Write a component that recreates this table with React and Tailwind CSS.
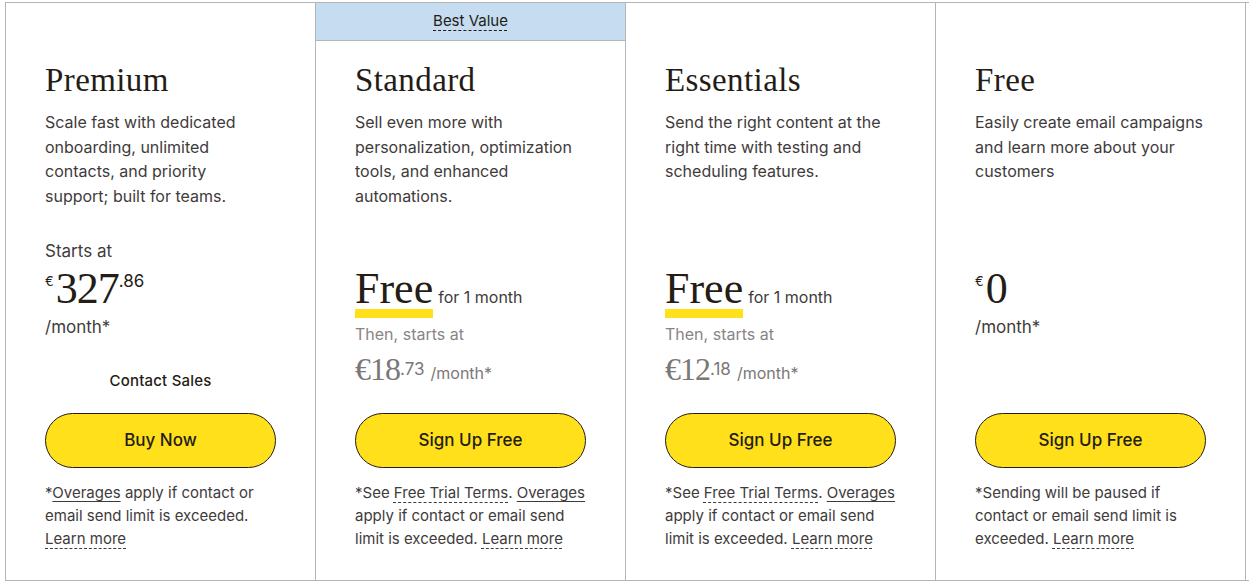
import React from 'react';

const sans = { fontFamily: 'Inter, "Liberation Sans", sans-serif' };

const Dotted = ({ children }) => (
  <a href="#" className="underline decoration-dashed decoration-1 underline-offset-[4px]">
    {children}
  </a>
);

const Solid = ({ children }) => (
  <a href="#" className="underline decoration-1 underline-offset-[3px]">
    {children}
  </a>
);

const BigPrice = ({ whole, cents }) => (
  <div className="flex items-start h-[52px] text-[#241c15]">
    <span className="text-[13px] leading-[13px] mt-[12px] mr-[2px]">€</span>
    <span className="font-['Liberation_Serif',serif] text-[44px] leading-[52px] tracking-[-1px]">{whole}</span>
    {cents && <span className="text-[17px] leading-[17px] mt-[10px]">.{cents}</span>}
  </div>
);

const TrialPrice = ({ whole, cents }) => (
  <>
    <div className="flex items-baseline gap-[5px] mt-[30px]">
      <span className="inline-block font-['Liberation_Serif',serif] text-[44px] leading-[40px] text-[#241c15] border-b-[9px] border-[#ffe01b]">
        Free
      </span>
      <span className="text-[16px] text-[#403b3b]">for 1 month</span>
    </div>
    <div className="mt-[4px] text-[16px] leading-6 text-[#8a8585]">Then, starts at</div>
    <div className="flex items-start mt-[7px] text-[#7c7777]">
      <span className="font-['Liberation_Serif',serif] text-[32px] leading-[32px] tracking-[-1px]">€{whole}</span>
      <span className="text-[17px] leading-[17px] mt-[8px]">.{cents}</span>
      <span className="text-[16px] leading-[16px] mt-[12px] ml-[6px]">/month*</span>
    </div>
  </>
);

const Column = ({ band, title, desc, price, cta, note, last }) => (
  <div
    className={`flex flex-col w-[310px] border-l border-[#b5b5b5] ${last ? 'w-[311px] border-r' : ''}`}
  >
    {band ? (
      <div className="h-[38px] flex items-center justify-center bg-[#c5dcf1] border-b border-[#b5b5b5] text-[15px] text-[#241c15]">
        <Dotted>{band}</Dotted>
      </div>
    ) : (
      <div className="h-[38px]" />
    )}
    <div className="flex flex-col px-[39px]">
      <h2 className="mt-[21px] font-['Liberation_Serif',serif] text-[33px] leading-[36px] tracking-[0.4px] text-[#241c15]">
        {title}
      </h2>
      <p className="mt-[12px] h-[129px] text-[16px] leading-[24.5px] text-[#403b3b] whitespace-nowrap">{desc}</p>
      <div className="flex flex-col h-[174px]">{price}</div>
      <button className="w-full h-[55px] rounded-full bg-[#ffe01b] border border-[#241c15] text-[17px] font-medium text-[#241c15]">
        {cta}
      </button>
      <p className="mt-[13px] text-[15px] leading-[23px] text-[#403b3b] whitespace-nowrap">{note}</p>
    </div>
  </div>
);

const App = () => {
  return (
    <div className="w-[1249px] h-[584px] bg-white pt-[2px] pl-[5px]" style={sans}>
      <div className="flex h-[579px] border-y border-[#b5b5b5]">
        <Column
          title="Premium"
          desc={
            <>
              Scale fast with dedicated
              <br />
              onboarding, unlimited
              <br />
              contacts, and priority
              <br />
              support; built for teams.
            </>
          }
          price={
            <>
              <div className="text-[17px] leading-6 text-[#403b3b]">Starts at</div>
              <BigPrice whole="327" cents="86" />
              <div className="text-[17px] leading-6 text-[#403b3b]">/month*</div>
              <div className="mt-[30px] text-center text-[15px] leading-6 font-medium tracking-[0.2px] text-[#241c15]">
                Contact Sales
              </div>
            </>
          }
          cta="Buy Now"
          note={
            <>
              *<Solid>Overages</Solid> apply if contact or
              <br />
              email send limit is exceeded.
              <br />
              <Dotted>Learn more</Dotted>
            </>
          }
        />
        <Column
          band="Best Value"
          title="Standard"
          desc={
            <>
              Sell even more with
              <br />
              personalization, optimization
              <br />
              tools, and enhanced
              <br />
              automations.
            </>
          }
          price={<TrialPrice whole="18" cents="73" />}
          cta="Sign Up Free"
          note={
            <>
              *See <Dotted>Free Trial Terms</Dotted>. <Solid>Overages</Solid>
              <br />
              apply if contact or email send
              <br />
              limit is exceeded. <Dotted>Learn more</Dotted>
            </>
          }
        />
        <Column
          title="Essentials"
          desc={
            <>
              Send the right content at the
              <br />
              right time with testing and
              <br />
              scheduling features.
            </>
          }
          price={<TrialPrice whole="12" cents="18" />}
          cta="Sign Up Free"
          note={
            <>
              *See <Dotted>Free Trial Terms</Dotted>. <Solid>Overages</Solid>
              <br />
              apply if contact or email send
              <br />
              limit is exceeded. <Dotted>Learn more</Dotted>
            </>
          }
        />
        <Column
          last
          title="Free"
          desc={
            <>
              Easily create email campaigns
              <br />
              and learn more about your
              <br />
              customers
            </>
          }
          price={
            <>
              <div className="h-6 shrink-0" />
              <BigPrice whole="0" />
              <div className="text-[17px] leading-6 text-[#403b3b]">/month*</div>
            </>
          }
          cta="Sign Up Free"
          note={
            <>
              *Sending will be paused if
              <br />
              contact or email send limit is
              <br />
              exceeded. <Dotted>Learn more</Dotted>
            </>
          }
        />
      </div>
    </div>
  );
};

export default App;
